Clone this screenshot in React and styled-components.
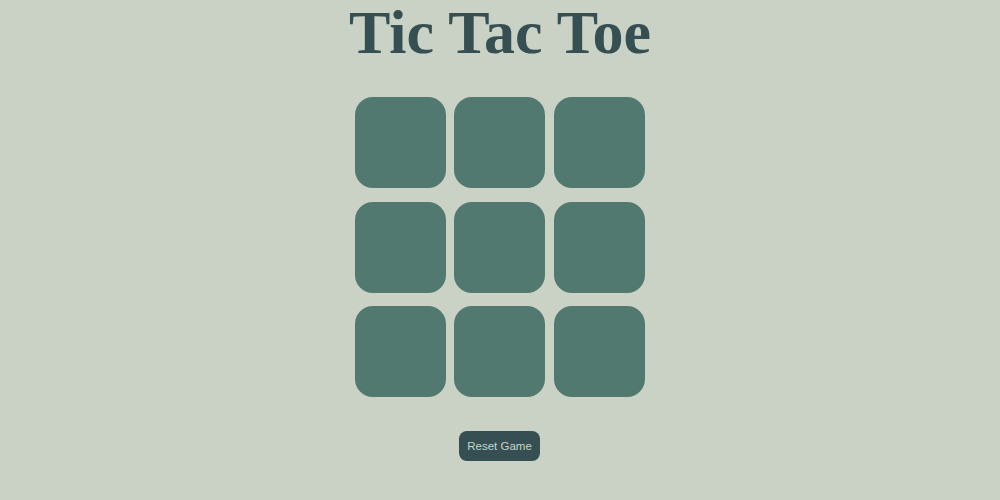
import React, { useState } from "react";
import styled, { createGlobalStyle } from "styled-components";

const Global = createGlobalStyle`
    body {
        margin: 0;
        background: #cad2c5;
        font-family: "Liberation Sans", Arial, sans-serif;
    }
`;

const Page = styled.div`
    display: flex;
    flex-direction: column;
    align-items: center;
    min-height: 500px;
`;

const Title = styled.h1`
    margin: 1px 0 0;
    font-family: "Liberation Serif", "Times New Roman", serif;
    font-size: 62px;
    line-height: 62px;
    font-weight: 700;
    color: #354f52;
`;

const Board = styled.div`
    display: grid;
    grid-template-columns: repeat(3, 91px);
    grid-auto-rows: 91px;
    column-gap: 8.5px;
    row-gap: 13.5px;
    margin: 34px 1px 0 0;
`;

const Cell = styled.button`
    border: none;
    border-radius: 18px;
    background: #52796f;
    color: #cad2c5;
    font-family: "Liberation Sans", Arial, sans-serif;
    font-size: 48px;
    font-weight: 700;
    cursor: pointer;
    padding: 0;
`;

const Reset = styled.button`
    margin: 34px 1px 0 0;
    height: 30px;
    padding: 0 8px;
    border: none;
    border-radius: 8px;
    background: #354f52;
    color: #cad2c5;
    font-family: "Liberation Sans", Arial, sans-serif;
    font-size: 11.5px;
    cursor: pointer;
`;

export default function App() {
    const [cells, setCells] = useState(Array(9).fill(""));
    const [turn, setTurn] = useState("X");

    const onPlay = (i) => {
        if (cells[i]) return;
        const next = [...cells];
        next[i] = turn;
        setCells(next);
        setTurn(turn === "X" ? "O" : "X");
    };

    const onReset = () => {
        setCells(Array(9).fill(""));
        setTurn("X");
    };

    return (
        <Page>
            <Global />
            <Title>Tic Tac Toe</Title>
            <Board>
                {cells.map((c, i) => (
                    <Cell key={i} onClick={() => onPlay(i)}>{c}</Cell>
                ))}
            </Board>
            <Reset onClick={onReset}>Reset Game</Reset>
        </Page>
    );
}
